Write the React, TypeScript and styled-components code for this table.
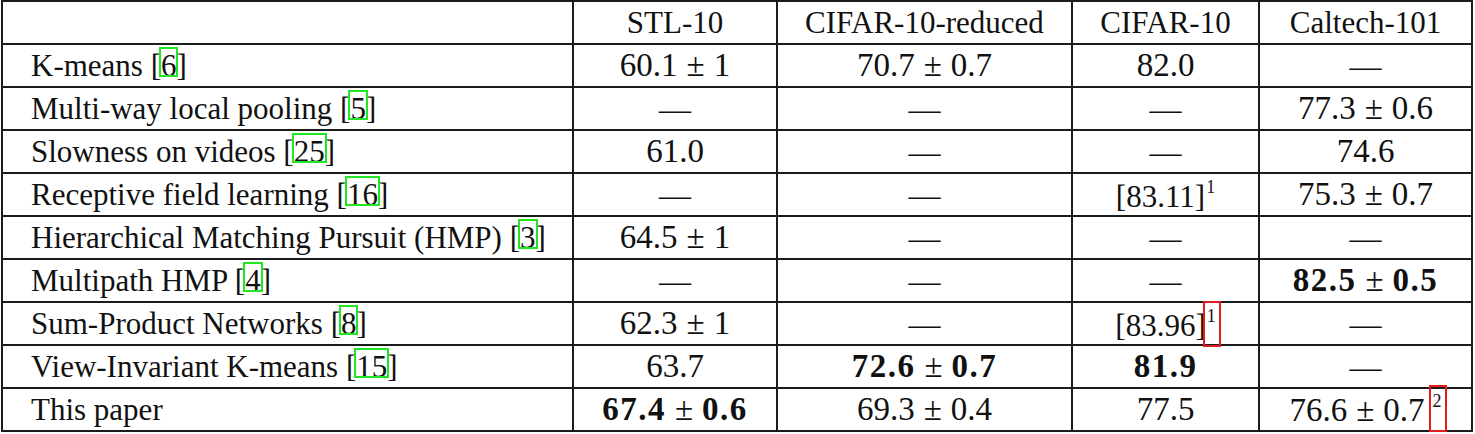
import React from "react";
import styled, { createGlobalStyle, css } from "styled-components";

const GlobalStyle = createGlobalStyle`
  html, body { margin: 0; padding: 0; background: #fff; }
  body { font-family: "Liberation Serif", "Times New Roman", serif; color: #000; }
`;

const Page = styled.div`
  padding: 0 0 0 1px;
`;

const Table = styled.table`
  border-collapse: collapse;
  table-layout: fixed;
  font-family: "Liberation Serif", "Times New Roman", serif;
  font-size: 31px;
  color: #111;
`;

const Row = styled.tr`
  height: 43px;
`;

const Cell = styled.td<{ $first?: boolean }>`
  border: 2px solid #1c1c1c;
  padding: 0 0 0 ${(p) => (p.$first ? "28px" : "0")};
  text-align: ${(p) => (p.$first ? "left" : "center")};
  white-space: nowrap;
  line-height: 1;
  vertical-align: middle;
  height: 41px;
  box-sizing: border-box;
`;

const Num = styled.span<{ $bold?: boolean }>`
  font-size: 33px;
  font-weight: ${(p) => (p.$bold ? 700 : 400)};
  letter-spacing: ${(p) => (p.$bold ? "1.5px" : "0")};
`;

const Pm = styled.span`
  font-size: 33px;
  font-weight: 400;
  margin: 0 9px;
`;

const Dash = styled.span`
  font-size: 32px;
`;

const Cite = styled.span`
  position: relative;
  &::after {
    content: "";
    position: absolute;
    left: -2px;
    right: -2px;
    top: -1px;
    bottom: 6px;
    border: 2px solid #22e622;
  }
`;

const Sup = styled.span<{ $boxed?: boolean; $gap?: boolean }>`
  position: relative;
  display: inline-block;
  font-size: 18px;
  line-height: 18px;
  vertical-align: 14px;
  margin-left: ${(p) => (p.$gap ? "8px" : "1px")};
  ${(p) =>
    p.$boxed &&
    css`
      &::after {
        content: "";
        position: absolute;
        left: -4px;
        width: 18px;
        top: ${p.$gap ? "-7px" : "-6px"};
        height: ${p.$gap ? "47px" : "46px"};
        box-sizing: border-box;
        border: 2px solid #e41b1b;
      }
    `}
`;

type NumVal = {
  kind: "num";
  a: string;
  b?: string;
  bold?: boolean;
  sup?: string;
  boxed?: boolean;
  gap?: boolean;
  bracket?: boolean;
};
type Val = { kind: "dash" } | NumVal;

const D: Val = { kind: "dash" };
const n = (a: string, b?: string, extra: Partial<NumVal> = {}): Val => ({
  kind: "num",
  a,
  b,
  ...extra,
});

const rows: { name: string; cite?: string; vals: Val[] }[] = [
  { name: "K-means", cite: "6", vals: [n("60.1", "1"), n("70.7", "0.7"), n("82.0"), D] },
  { name: "Multi-way local pooling", cite: "5", vals: [D, D, D, n("77.3", "0.6")] },
  { name: "Slowness on videos", cite: "25", vals: [n("61.0"), D, D, n("74.6")] },
  {
    name: "Receptive field learning",
    cite: "16",
    vals: [D, D, n("83.11", undefined, { bracket: true, sup: "1" }), n("75.3", "0.7")],
  },
  { name: "Hierarchical Matching Pursuit (HMP)", cite: "3", vals: [n("64.5", "1"), D, D, D] },
  { name: "Multipath HMP", cite: "4", vals: [D, D, D, n("82.5", "0.5", { bold: true })] },
  {
    name: "Sum-Product Networks",
    cite: "8",
    vals: [n("62.3", "1"), D, n("83.96", undefined, { bracket: true, sup: "1", boxed: true }), D],
  },
  {
    name: "View-Invariant K-means",
    cite: "15",
    vals: [n("63.7"), n("72.6", "0.7", { bold: true }), n("81.9", undefined, { bold: true }), D],
  },
  {
    name: "This paper",
    vals: [
      n("67.4", "0.6", { bold: true }),
      n("69.3", "0.4"),
      n("77.5"),
      n("76.6", "0.7", { sup: "2", boxed: true, gap: true }),
    ],
  },
];

const headers = ["STL-10", "CIFAR-10-reduced", "CIFAR-10", "Caltech-101"];
const widths = [571, 204, 295, 187, 213];

const Bracketed = styled.span`
  font-size: 31px;
`;

function Value({ v }: { v: Val }) {
  if (v.kind === "dash") return <Dash>—</Dash>;
  if (v.bracket)
    return (
      <>
        <Bracketed>[{v.a}]</Bracketed>
        {v.sup && <Sup $boxed={v.boxed}>{v.sup}</Sup>}
      </>
    );
  return (
    <>
      <Num $bold={v.bold}>{v.a}</Num>
      {v.b && (
        <>
          <Pm>±</Pm>
          <Num $bold={v.bold}>{v.b}</Num>
        </>
      )}
      {v.sup && (
        <Sup $boxed={v.boxed} $gap={v.gap}>
          {v.sup}
        </Sup>
      )}
    </>
  );
}

export default function App() {
  return (
    <Page>
      <GlobalStyle />
      <Table>
        <colgroup>
          {widths.map((w, i) => (
            <col key={i} style={{ width: w }} />
          ))}
        </colgroup>
        <tbody>
          <Row>
            <Cell $first />
            {headers.map((h) => (
              <Cell key={h}>{h}</Cell>
            ))}
          </Row>
          {rows.map((r) => (
            <Row key={r.name}>
              <Cell $first>
                {r.name}
                {r.cite && (
                  <>
                    {" ["}
                    <Cite>{r.cite}</Cite>
                    {"]"}
                  </>
                )}
              </Cell>
              {r.vals.map((v, i) => (
                <Cell key={i}>
                  <Value v={v} />
                </Cell>
              ))}
            </Row>
          ))}
        </tbody>
      </Table>
    </Page>
  );
}
